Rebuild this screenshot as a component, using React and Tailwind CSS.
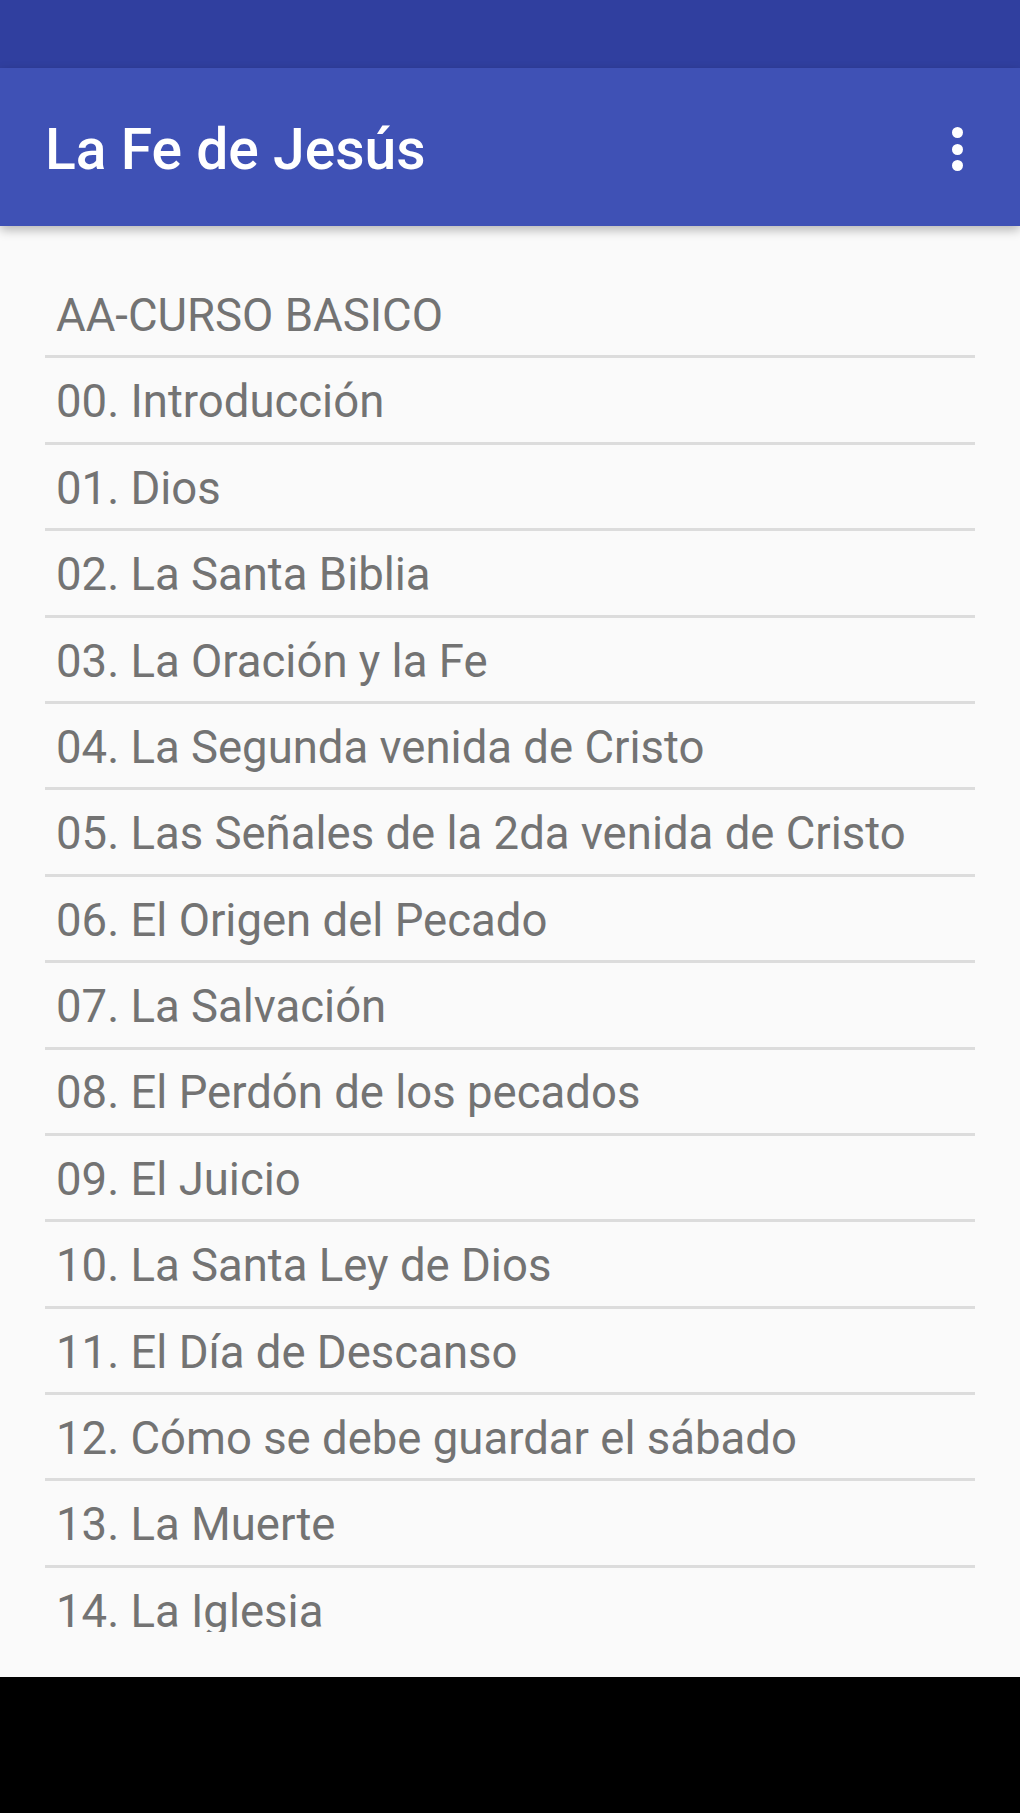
const items = [
  'AA-CURSO BASICO',
  '00. Introducción',
  '01. Dios',
  '02. La Santa Biblia',
  '03. La Oración y la Fe',
  '04. La Segunda venida de Cristo',
  '05. Las Señales de la 2da venida de Cristo',
  '06. El Origen del Pecado',
  '07. La Salvación',
  '08. El Perdón de los pecados',
  '09. El Juicio',
  '10. La Santa Ley de Dios',
  '11. El Día de Descanso',
  '12. Cómo se debe guardar el sábado',
  '13. La Muerte',
  '14. La Iglesia',
];

export default function App() {
  return (
    <div className="w-[1020px] h-[1813px] flex flex-col bg-black font-['Roboto',sans-serif]">
      {/* status bar */}
      <div className="h-[68px] bg-[#303f9f]" />

      {/* toolbar */}
      <header className="relative z-10 h-[158px] bg-[#3f51b5] flex items-center justify-between pl-[45px] pr-[57px] shadow-[0_4px_10px_rgba(0,0,0,0.28)]">
        <h1 className="text-white text-[57px] font-medium leading-none pt-[4px]">La Fe de Jesús</h1>
        <div className="flex flex-col gap-[5.7px] pt-[4px]">
          <span className="w-[11px] h-[11px] rounded-full bg-white" />
          <span className="w-[11px] h-[11px] rounded-full bg-white" />
          <span className="w-[11px] h-[11px] rounded-full bg-white" />
        </div>
      </header>

      {/* list */}
      <main className="h-[1451px] bg-[#fafafa] px-[45px] py-[45px]">
        <ul className="h-full overflow-hidden pt-[1px]">
          {items.map((t, i) => (
            <li key={i}>
              <div className="h-[83.4px] flex items-center pl-[11px] pt-[4px] text-[45.5px] text-[#737373] leading-none whitespace-nowrap">
                {t}
              </div>
              <div className="h-[3px] bg-[#dcdcdc]" />
            </li>
          ))}
        </ul>
      </main>

      {/* nav bar */}
      <div className="flex-1 bg-black" />
    </div>
  );
}
